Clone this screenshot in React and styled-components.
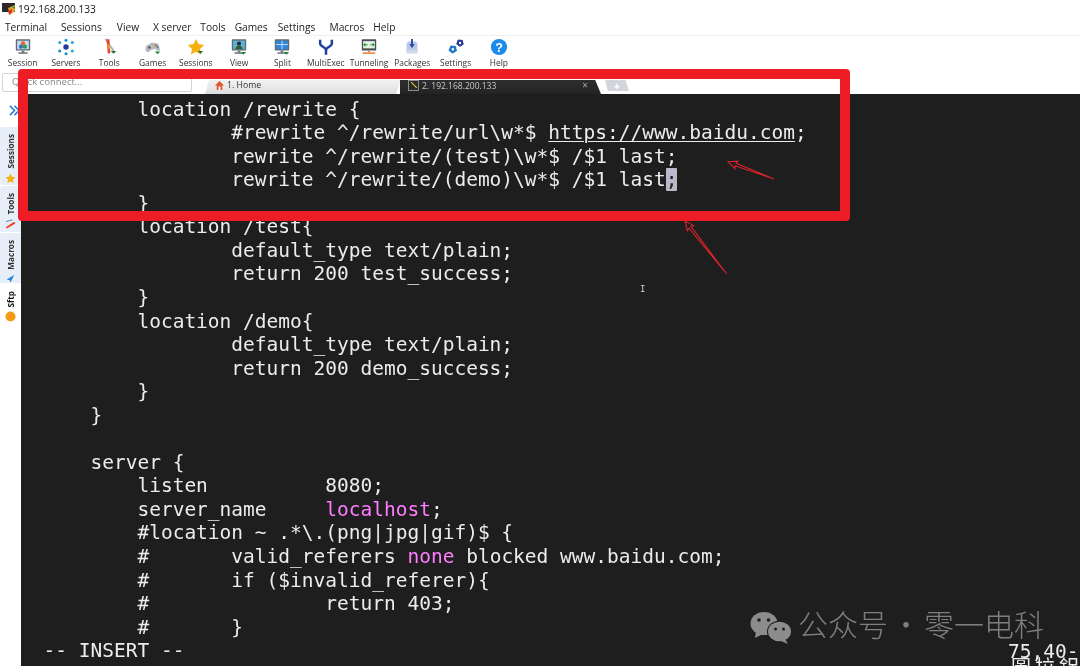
import React from 'react';
import styled, { createGlobalStyle } from 'styled-components';

const Global = createGlobalStyle`
  html, body { margin: 0; padding: 0; background: #fff; }
`;

const Page = styled.div`
  position: relative;
  width: 1080px;
  height: 669px;
  overflow: hidden;
  background: #fff;
  display: flex;
  flex-direction: column;
  font-family: "Open Sans", "Liberation Sans", sans-serif;
  color: #222;
  filter: blur(0.35px);
`;

const TitleBar = styled.div`
  height: 18px;
  display: flex;
  align-items: center;
  gap: 3px;
  padding-left: 2px;
  font-size: 10.2px;
  color: #111;
`;

const MenuBar = styled.div`
  height: 17px;
  display: flex;
  align-items: center;
  padding-left: 5px;
  font-size: 10.2px;
  color: #222;
  border-bottom: 1px solid #f0f0f0;
`;

const MenuItem = styled.span`
  margin-left: ${(p) => p.$gap || 0}px;
`;

const Toolbar = styled.div`
  height: 35px;
  display: flex;
  padding-left: 1px;
`;

const ToolButton = styled.div`
  width: 43.3px;
  display: flex;
  flex-direction: column;
  align-items: center;
  padding-top: 2px;
  font-size: 8.4px;
  line-height: 11px;
  color: #333;
  white-space: nowrap;
  svg { width: 18px; height: 18px; display: block; margin-bottom: 1px; }
`;

const TabRow = styled.div`
  height: 23px;
  display: flex;
  align-items: flex-end;
  padding-left: 2px;
`;

const QuickConnect = styled.div`
  width: 190px;
  height: 19px;
  margin-bottom: 2px;
  margin-right: 13px;
  border: 1px solid #d4d4d4;
  border-radius: 2px;
  display: flex;
  align-items: center;
  padding: 0 0 2px 9px;
  box-sizing: border-box;
  font-size: 9.5px;
  color: #888;
`;

const HomeTab = styled.div`
  width: 196px;
  height: 14.5px;
  display: flex;
  align-items: center;
  gap: 2px;
  padding: 0 0 3px 9px;
  box-sizing: border-box;
  font-size: 8.7px;
  color: #333;
  background: linear-gradient(#f2f2f2, #dedede);
  clip-path: polygon(4px 0, 100% 0, calc(100% - 5px) 100%, 0 100%);
`;

const ActiveTab = styled.div`
  width: 201px;
  height: 14.5px;
  margin-left: -1px;
  display: flex;
  align-items: center;
  gap: 3px;
  padding: 0 13px 3px 8px;
  box-sizing: border-box;
  font-size: 8.5px;
  color: #c8c8c8;
  background: linear-gradient(#2e2e2e, #232323);
  clip-path: polygon(0 0, calc(100% - 6px) 0, 100% 100%, 0 100%);
`;

const TabKey = styled.span`
  width: 9px;
  height: 9px;
  background: #2a2a2a;
  border: 1px solid #8d8d8d;
  display: flex;
  align-items: center;
  justify-content: center;
  svg { width: 8px; height: 8px; }
`;

const TabClose = styled.span`
  margin-left: auto;
  font-size: 10px;
  color: #aaa;
`;

const PlusTab = styled.div`
  width: 24px;
  height: 11px;
  margin: 0 0 3px 4px;
  display: flex;
  align-items: center;
  justify-content: center;
  background: #d4d4dc;
  clip-path: polygon(0 0, 85% 0, 100% 100%, 12% 100%);
  color: #fff;
  font-size: 11px;
  font-weight: 700;
  line-height: 1;
`;

const Body = styled.div`
  height: 572px;
  display: flex;
`;

const Sidebar = styled.div`
  width: 21px;
  flex: none;
  display: flex;
  flex-direction: column;
  align-items: stretch;
`;

const SideArrow = styled.div`
  height: 33px;
  display: flex;
  align-items: center;
  justify-content: flex-end;
  padding-right: 1px;
  svg { width: 11px; height: 11px; }
`;

const SideTab = styled.div`
  height: ${(p) => p.$h}px;
  margin-bottom: 1px;
  display: flex;
  flex-direction: column;
  align-items: center;
  gap: 4px;
  padding-top: 7px;
  box-sizing: border-box;
  background: ${(p) => (p.$active ? '#ffffff' : '#e6eef9')};
  border-radius: 2px 0 0 2px;
  font-size: 8.2px;
  font-weight: 700;
  color: #333;
  svg { width: 11px; height: 11px; }
`;

const SideLabel = styled.span`
  writing-mode: vertical-rl;
  transform: rotate(180deg);
  white-space: nowrap;
  color: ${(p) => (p.$active ? '#111' : '#333')};
`;

const Terminal = styled.div`
  flex: 1;
  min-width: 0;
  background: #1e1e1e;
  padding: 3.6px 0 0 22.5px;
  overflow: hidden;
  position: relative;
  font-family: "DejaVu Sans Mono", "Liberation Mono", monospace;
  font-size: 19.5px;
  color: #ececec;
`;

const Line = styled.div`
  height: 23.56px;
  line-height: 23.56px;
  white-space: pre;
`;

const Pink = styled.span`
  color: #ff7dff;
`;

const Link = styled.span`
  text-decoration: underline;
  text-underline-offset: 2px;
  text-decoration-thickness: 1px;
`;

const Cursor = styled.span`
  background: #b9b9c9;
  color: #1e1e1e;
  border-radius: 1px;
`;

const Status = styled.span`
  position: absolute;
  left: 987px;
  top: 546px;
  white-space: pre;
  line-height: 23.56px;
`;

const Garbled = styled.span`
  position: absolute;
  left: 990px;
  top: 561px;
  font-family: "Noto Sans CJK TC", "Noto Sans CJK SC", sans-serif;
  font-size: 20px;
  letter-spacing: 4px;
  line-height: 24px;
  color: #eee;
  white-space: pre;
`;

const Highlight = styled.div`
  position: absolute;
  left: 18px;
  top: 69px;
  width: 832px;
  height: 152px;
  box-sizing: border-box;
  border: 10px solid #ee1c25;
  border-radius: 4px;
  pointer-events: none;
`;

const Marks = styled.svg`
  position: absolute;
  inset: 0;
  width: 1080px;
  height: 669px;
  pointer-events: none;
`;

const Watermark = styled.div`
  position: absolute;
  left: 750px;
  top: 601px;
  display: flex;
  align-items: center;
  gap: 6px;
  font-family: "Noto Sans CJK SC", sans-serif;
  font-size: 30px;
  font-weight: 300;
  line-height: 44px;
  color: #7f7f7f;
  white-space: pre;
  svg { width: 42px; height: 33px; margin-top: 8px; }
`;

const WatermarkDot = styled.span`
  margin: 0 3px;
`;

const Caret = styled.span`
  position: absolute;
  left: 640px;
  top: 284px;
  width: 5px;
  height: 10px;
  font-family: "DejaVu Sans Mono", monospace;
  font-size: 9px;
  line-height: 10px;
  color: #cfcfcf;
`;

const Monitor = ({ screen, children }) => (
  <svg viewBox="0 0 20 20">
    <rect x="2" y="1.5" width="16" height="12.5" rx="1" fill="#5f6b76" />
    <rect x="3.5" y="3" width="13" height="9.5" fill={screen} />
    <rect x="8.5" y="14" width="3" height="2" fill="#6c7680" />
    <rect x="5" y="16" width="10" height="1.4" fill="#4a5560" />
    {children}
  </svg>
);

const GreenTick = () => <path d="M12 15.5h6l-3 3z" fill="#1f8a2e" />;

const SessionIcon = () => (
  <Monitor screen="#c7d9ec">
    <circle cx="10" cy="6" r="2.3" fill="#e8622a" />
    <circle cx="7.8" cy="9.6" r="2.3" fill="#2b6fd0" />
    <circle cx="12.2" cy="9.6" r="2.3" fill="#2f9e44" />
  </Monitor>
);

const ServersIcon = () => (
  <svg viewBox="0 0 20 20">
    <circle cx="10" cy="10" r="3" fill="#27379c" />
    {[[3, 5], [10, 2.5], [17, 5], [3, 14.5], [17, 14.5], [10, 17.5]].map(([x, y], i) => (
      <circle key={i} cx={x} cy={y} r={1.7} fill={i % 2 ? '#1592c9' : '#27a6d8'} />
    ))}
  </svg>
);

const ToolsIcon = () => (
  <svg viewBox="0 0 20 20">
    <path d="M5 1l2-.5 9 13-2 1.5z" fill="#a9b6c8" />
    <path d="M7 1.5h3.5l.5 7 .5 7.5c0 1.5-3 1.5-3 0l-.5-7z" fill="#e8462a" />
    <rect x="8.5" y="7" width="2.6" height="5" fill="#f09a2a" />
    <path d="M12 14.5h6l-3 3z" fill="#1f6e2e" />
  </svg>
);

const GamesIcon = () => (
  <svg viewBox="0 0 20 20">
    <path d="M2 9l7-4 7 1.5 2 7-3 1-2.5-2.5-5 1.5-3 2.5-3-2z" fill="#b4bac0" />
    <circle cx="6" cy="10.5" r="1.4" fill="#555" />
    <circle cx="13" cy="8" r="1" fill="#d8402a" />
    <circle cx="15" cy="10" r="1" fill="#2b6fd0" />
    <circle cx="12" cy="10.5" r="1" fill="#e0b020" />
    <path d="M12 15h6l-3 3z" fill="#1f8a2e" />
  </svg>
);

const StarIcon = () => (
  <svg viewBox="0 0 20 20">
    <path d="M10 1l2.8 5.8 6.2.9-4.5 4.4 1.1 6.2L10 15.4l-5.6 2.9 1.1-6.2L1 7.7l6.2-.9z" fill="#f5b014" />
    <path d="M12 14.5h6l-3 3z" fill="#1f6e2e" />
  </svg>
);

const ViewIcon = () => (
  <Monitor screen="#5fb4d8">
    <circle cx="10" cy="6.3" r="2.4" fill="#23303a" />
    <path d="M5.8 12.5c.4-3 2-3.8 4.2-3.8s3.8.8 4.2 3.8z" fill="#3a5a2a" />
    <GreenTick />
  </Monitor>
);

const SplitIcon = () => (
  <Monitor screen="#2f86d8">
    <path d="M3.5 7.2h13M10 3v9.5" stroke="#cfe4f8" strokeWidth="1" />
    <GreenTick />
  </Monitor>
);

const ForkIcon = () => (
  <svg viewBox="0 0 20 20">
    <path d="M3.5 2v4.5c0 3 6.5 3.5 6.5 7V18.5M16.5 2v4.5c0 3-6.5 3.5-6.5 7" fill="none" stroke="#1d3f9e" strokeWidth="2.8" />
  </svg>
);

const TunnelIcon = () => (
  <svg viewBox="0 0 20 20">
    <rect x="2" y="1.5" width="16" height="12.5" rx="1" fill="#4a4f55" />
    <rect x="3.5" y="3.5" width="13" height="8" fill="#e8f2e4" />
    <path d="M4.5 7.5h4M6 6l-1.5 1.5L6 9M11.5 7.5h4M14 6l1.5 1.5L14 9" fill="none" stroke="#1f9a38" strokeWidth="1.3" />
    <rect x="9" y="14" width="2" height="2" fill="#e8782a" />
    <rect x="3" y="16" width="14" height="1.6" fill="#e8782a" />
  </svg>
);

const PackageIcon = () => (
  <svg viewBox="0 0 20 20">
    <path d="M4 6l2-2h8l2 2v11H4z" fill="#b8c8e8" />
    <rect x="4" y="13" width="12" height="4" fill="#cfd8ea" />
    <path d="M10 1v8" stroke="#2a3fa0" strokeWidth="2" />
    <path d="M7 7h6l-3 4z" fill="#2a3fa0" />
  </svg>
);

const Gear = ({ cx, cy, r, color }) => (
  <g fill="none" stroke={color}>
    <circle cx={cx} cy={cy} r={r} strokeWidth={r * 0.9} />
    <circle cx={cx} cy={cy} r={r * 1.45} strokeWidth={r * 0.5} strokeDasharray={`${r * 0.95} ${r * 0.87}`} />
  </g>
);

const SettingsIcon = () => (
  <svg viewBox="0 0 20 20">
    <Gear cx={6.5} cy={12.5} r={2.7} color="#1f78d0" />
    <Gear cx={14.5} cy={5.5} r={2.4} color="#27379c" />
  </svg>
);

const HelpIcon = () => (
  <svg viewBox="0 0 20 20">
    <circle cx="10" cy="10" r="9" fill="#1b8ceb" />
    <text x="10" y="15" textAnchor="middle" fontSize="14" fontWeight="700" fontFamily="Liberation Sans, sans-serif" fill="#fff">?</text>
  </svg>
);

const tools = [
  ['Session', SessionIcon],
  ['Servers', ServersIcon],
  ['Tools', ToolsIcon],
  ['Games', GamesIcon],
  ['Sessions', StarIcon],
  ['View', ViewIcon],
  ['Split', SplitIcon],
  ['MultiExec', ForkIcon],
  ['Tunneling', TunnelIcon],
  ['Packages', PackageIcon],
  ['Settings', SettingsIcon],
  ['Help', HelpIcon],
];

const menus = [
  ['Terminal', 0],
  ['Sessions', 14],
  ['View', 15],
  ['X server', 14],
  ['Tools', 9],
  ['Games', 9],
  ['Settings', 10],
  ['Macros', 14],
  ['Help', 9],
];

const code = [
  '        location /rewrite {',
  <>{'                #rewrite ^/rewrite/url\\w*$ '}<Link>https://www.baidu.com</Link>;</>,
  '                rewrite ^/rewrite/(test)\\w*$ /$1 last;',
  <>{'                rewrite ^/rewrite/(demo)\\w*$ /$1 last'}<Cursor>;</Cursor></>,
  '        }',
  '        location /test{',
  '                default_type text/plain;',
  '                return 200 test_success;',
  '        }',
  '        location /demo{',
  '                default_type text/plain;',
  '                return 200 demo_success;',
  '        }',
  '    }',
  ' ',
  '    server {',
  '        listen          8080;',
  <>{'        server_name     '}<Pink>localhost</Pink>;</>,
  '        #location ~ .*\\.(png|jpg|gif)$ {',
  <>{'        #       valid_referers '}<Pink>none</Pink> blocked www.baidu.com;</>,
  '        #       if ($invalid_referer){',
  '        #               return 403;',
  '        #       }',
  '-- INSERT --',
];

const App = () => (
  <Page>
    <Global />
    <TitleBar>
      <svg width="13" height="12" viewBox="0 0 13 12">
        <rect width="13" height="9" fill="#2a2a2a" />
        <path d="M6 5l7-3v6l-5 4z" fill="#e8a020" />
        <path d="M6 8l4-2v3l-3 3z" fill="#d8342a" />
        <path d="M10 4l3-1v3z" fill="#2f9e44" />
      </svg>
      192.168.200.133
    </TitleBar>
    <MenuBar>
      {menus.map(([label, gap]) => (
        <MenuItem key={label} $gap={gap}>{label}</MenuItem>
      ))}
    </MenuBar>
    <Toolbar>
      {tools.map(([label, Icon]) => (
        <ToolButton key={label}>
          <Icon />
          {label}
        </ToolButton>
      ))}
    </Toolbar>
    <TabRow>
      <QuickConnect>Quick connect...</QuickConnect>
      <HomeTab>
        <svg width="11" height="11" viewBox="0 0 12 12">
          <path d="M6 1L1 6h2v5h6V6h2z" fill="#e0552a" />
          <rect x="5" y="7" width="2" height="4" fill="#fff" />
        </svg>
        1. Home
      </HomeTab>
      <ActiveTab>
        <TabKey>
          <svg viewBox="0 0 10 10">
            <path d="M2 1l3 3-1 1-3-3zM5 4l4 4-1 1-4-4z" fill="#f0c030" />
          </svg>
        </TabKey>
        2. 192.168.200.133
        <TabClose>×</TabClose>
      </ActiveTab>
      <PlusTab>+</PlusTab>
    </TabRow>
    <Body>
      <Sidebar>
        <SideArrow>
          <svg viewBox="0 0 12 12">
            <path d="M1 1l5 5-5 5M6 1l5 5-5 5" fill="none" stroke="#2a7fd8" strokeWidth="1.8" />
          </svg>
        </SideArrow>
        <SideTab $h={58}>
          <SideLabel>Sessions</SideLabel>
          <svg viewBox="0 0 20 20">
            <path d="M10 1l2.8 5.8 6.2.9-4.5 4.4 1.1 6.2L10 15.4l-5.6 2.9 1.1-6.2L1 7.7l6.2-.9z" fill="#f5b014" />
          </svg>
        </SideTab>
        <SideTab $h={46}>
          <SideLabel>Tools</SideLabel>
          <svg viewBox="0 0 12 12">
            <path d="M1 4l7-2" stroke="#8a9ab0" strokeWidth="1.4" />
            <path d="M1.5 9.5L9 4.5c1.5-1 3 1 1.5 2L3 11c-1.5.8-2.5-.6-1.5-1.5z" fill="#e8462a" />
          </svg>
        </SideTab>
        <SideTab $h={50}>
          <SideLabel>Macros</SideLabel>
          <svg viewBox="0 0 12 12">
            <path d="M11 1L1 7l4 1 1 3z" fill="#2a86d8" />
          </svg>
        </SideTab>
        <SideTab $h={39} $active>
          <SideLabel $active>Sftp</SideLabel>
          <svg viewBox="0 0 12 12">
            <circle cx="6" cy="6" r="5.5" fill="#f59a14" />
          </svg>
        </SideTab>
      </Sidebar>
      <Terminal>
        {code.map((line, i) => (
          <Line key={i}>{line}</Line>
        ))}
        <Status>75,40-</Status>
        <Garbled>圖拉鋁</Garbled>
      </Terminal>
    </Body>
    <Highlight />
    <Marks viewBox="0 0 1080 669">
      <polygon
        points="728,161.7 737.8,161.2 736,163.3 774,179 735,165.7 735,168.6"
        fill="#1e1e1e"
        stroke="#d8232a"
        strokeWidth="1.1"
      />
      <polygon
        points="685,221 693.7,225.6 691,226.5 726.7,274 689,228.1 687.4,230.6"
        fill="#1e1e1e"
        stroke="#d8232a"
        strokeWidth="1.1"
      />
    </Marks>
    <Caret>I</Caret>
    <Watermark>
      <svg viewBox="0 0 42 33">
        <ellipse cx="14" cy="12.5" rx="13.5" ry="11.5" fill="#8c8c8c" />
        <path d="M6 20l-1 7 8-4z" fill="#8c8c8c" />
        <circle cx="9" cy="9" r="1.8" fill="#1e1e1e" />
        <circle cx="18.5" cy="9" r="1.8" fill="#1e1e1e" />
        <ellipse cx="29.5" cy="20.5" rx="12.5" ry="10.8" fill="#1e1e1e" />
        <ellipse cx="29.5" cy="20.5" rx="11.5" ry="9.8" fill="#8c8c8c" />
        <path d="M35 28l3 5-7-3z" fill="#8c8c8c" />
        <circle cx="25.5" cy="18" r="1.5" fill="#1e1e1e" />
        <circle cx="33.5" cy="18" r="1.5" fill="#1e1e1e" />
      </svg>
      <span>公众号<WatermarkDot>·</WatermarkDot>零一电科</span>
    </Watermark>
  </Page>
);

export default App;
